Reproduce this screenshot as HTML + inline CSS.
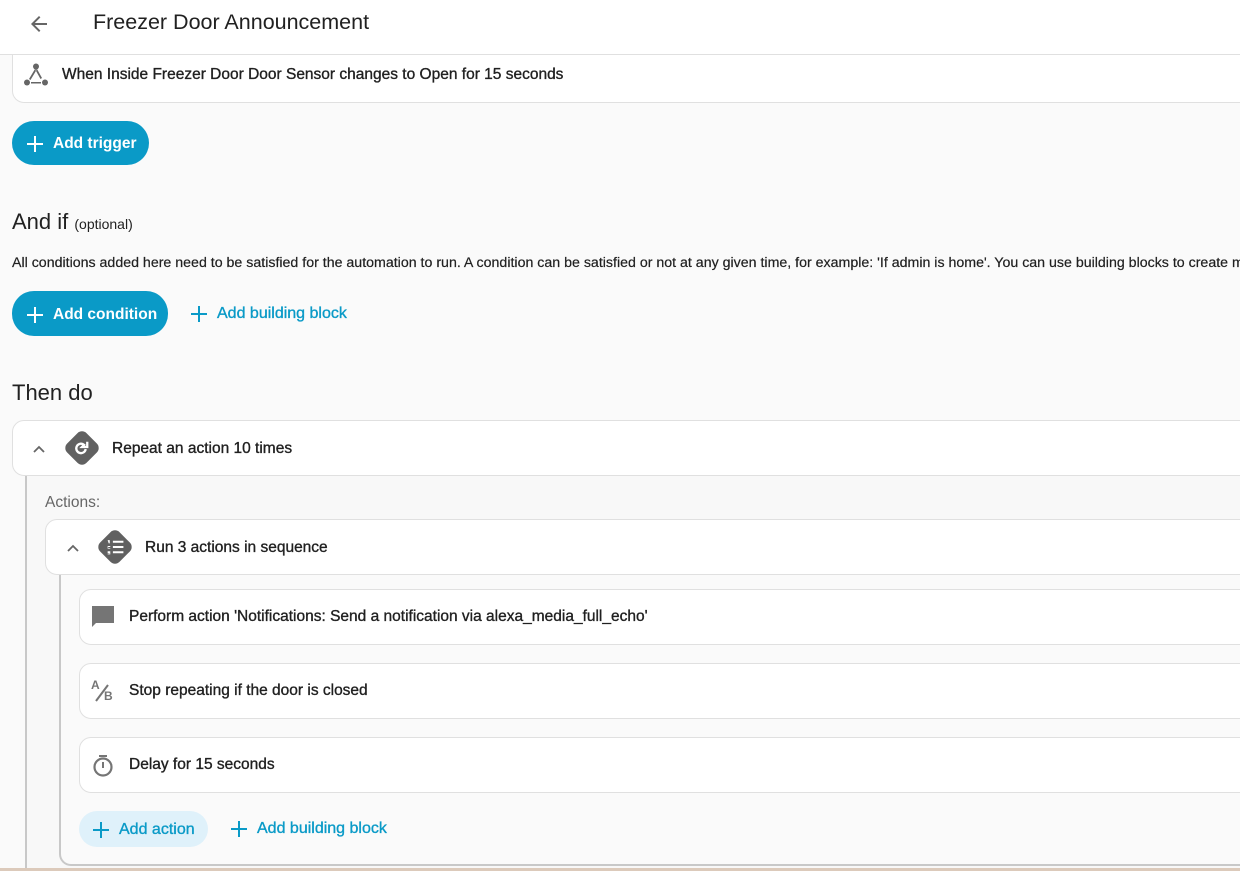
<!DOCTYPE html>
<html><head><style>
*{box-sizing:border-box;margin:0;padding:0}
html,body{width:1240px;height:871px;overflow:hidden}
body{background:#fafafa;font-family:"Liberation Sans",sans-serif;color:#212121;position:relative}
#w{position:absolute;left:0;top:0;width:1240px;height:871px;overflow:hidden}
.abs{position:absolute}
.hdr{left:0;top:0;width:1240px;height:55px;background:#fff;border-bottom:1px solid #e0e0e0}
.card{background:#fff;border:1px solid #e0e0e0;border-radius:12px}
.t{font-size:15.5px;white-space:nowrap;-webkit-text-stroke:0.35px #212121}
.btn{background:#0a9ac7;color:#fff;border-radius:22px;font-weight:bold;font-size:15.5px;display:flex;align-items:center;padding-left:14px}
.lnk{color:#0a9ac7;font-size:16px;display:flex;align-items:center;white-space:nowrap;-webkit-text-stroke:0.35px #0a9ac7}
.h2{font-size:22px;white-space:nowrap}
.pl{margin-right:9px;flex:none}
</style></head><body><div id="w">
<div class="abs hdr"></div>
<svg class="abs" style="left:27px;top:12px" width="24" height="24" viewBox="0 0 24 24"><path d="M20 11H7.8l5.6-5.6L12 4l-8 8 8 8 1.4-1.4L7.8 13H20z" fill="#666"/></svg>
<div class="abs" style="left:93px;top:10px;font-size:21.5px">Freezer Door Announcement</div>

<div class="abs card" style="left:12px;top:55px;width:1260px;height:48px;border-top:none;border-radius:0 0 12px 12px"></div>
<svg class="abs" style="left:23px;top:62px" width="26" height="26" viewBox="0 0 26 26" fill="#666"><circle cx="13" cy="4.5" r="3"/><circle cx="4" cy="20.5" r="3"/><circle cx="22" cy="20.5" r="3"/><path d="M12 7l-6 10 1.5 1 6-10zM14 7l5 9-1.5 1-5-9z"/><path d="M8 20h10v1.5H8z"/></svg>
<div class="abs t" style="left:62px;top:66px">When Inside Freezer Door Door Sensor changes to Open for 15 seconds</div>

<div class="abs btn" style="left:12px;top:121px;width:137px;height:44px;padding-top:2px"><svg class="pl" width="18" height="18" viewBox="0 0 18 18"><path d="M8 1h2v16H8zM1 8h16v2H1z" fill="#fff"/></svg>Add trigger</div>

<div class="abs h2" style="left:12px;top:209px">And if <span style="font-size:14px">(optional)</span></div>
<div class="abs" style="left:12px;top:255px;font-size:14.2px;white-space:nowrap;-webkit-text-stroke:0.2px #212121">All conditions added here need to be satisfied for the automation to run. A condition can be satisfied or not at any given time, for example: 'If admin is home'. You can use building blocks to create more complex conditions.</div>
<div class="abs btn" style="left:12px;top:291px;width:156px;height:45px;padding-top:2px"><svg class="pl" width="18" height="18" viewBox="0 0 18 18"><path d="M8 1h2v16H8zM1 8h16v2H1z" fill="#fff"/></svg>Add condition</div>
<div class="abs lnk" style="left:190px;top:305px"><svg class="pl" width="18" height="18" viewBox="0 0 18 18"><path d="M8 1h2v16H8zM1 8h16v2H1z" fill="#0a9ac7"/></svg>Add building block</div>

<div class="abs h2" style="left:12px;top:380px">Then do</div>

<div class="abs" style="left:25px;top:470px;width:1230px;height:398px;border-left:2px solid #c8c8c8;background:#f8f8f8"></div>
<div class="abs card" style="left:12px;top:420px;width:1260px;height:56px"></div>
<svg class="abs" style="left:30px;top:440px" width="18" height="18" viewBox="0 0 18 18"><path d="M4 12l5-5 5 5" stroke="#666" stroke-width="1.8" fill="none"/></svg>
<svg class="abs" style="left:61px;top:427px" width="42" height="42" viewBox="0 0 40 40"><rect x="7" y="7" width="26" height="26" rx="6" transform="rotate(45 20 20)" fill="#616161"/><path d="M25 14v5h-5l2-2a4.5 4.5 0 1 0 1.5 4" stroke="#fff" stroke-width="2.2" fill="none"/></svg>
<div class="abs t" style="left:112px;top:440px">Repeat an action 10 times</div>
<div class="abs" style="left:45px;top:494px;font-size:15.5px;color:#666">Actions:</div>

<div class="abs" style="left:59px;top:560px;width:1220px;height:306px;border-left:2px solid #c8c8c8;border-bottom:2px solid #c8c8c8;border-radius:0 0 0 12px;background:#fafafa"></div>
<div class="abs card" style="left:45px;top:519px;width:1230px;height:56px"></div>
<svg class="abs" style="left:64px;top:539px" width="18" height="18" viewBox="0 0 18 18"><path d="M4 12l5-5 5 5" stroke="#666" stroke-width="1.8" fill="none"/></svg>
<svg class="abs" style="left:94px;top:526px" width="42" height="42" viewBox="0 0 40 40"><rect x="7" y="7" width="26" height="26" rx="6" transform="rotate(45 20 20)" fill="#616161"/><path d="M18 14h10v2H18zM18 19h10v2H18zM18 24h10v2H18zM13 13.5h2v3h-1zM13 19h2.5v1h-2v1h2v.5h-2.5zM13 24h2.5v3H13v-.7h1.8v-.5H13z" fill="#fff"/></svg>
<div class="abs t" style="left:145px;top:539px">Run 3 actions in sequence</div>

<div class="abs card" style="left:79px;top:589px;width:1200px;height:56px"></div>
<svg class="abs" style="left:90px;top:604px" width="26" height="26" viewBox="0 0 26 26"><path d="M2 2h22v17H6l-4 4z" fill="#757575"/></svg>
<div class="abs t" style="left:129px;top:608px">Perform action 'Notifications: Send a notification via alexa_media_full_echo'</div>

<div class="abs card" style="left:79px;top:663px;width:1200px;height:56px"></div>
<div class="abs" style="left:91px;top:678px;font-size:12px;font-weight:bold;color:#757575">A</div>
<svg class="abs" style="left:92px;top:680px" width="24" height="24" viewBox="0 0 24 24"><path d="M4 21L16 5" stroke="#757575" stroke-width="2"/></svg>
<div class="abs" style="left:104px;top:689px;font-size:12px;font-weight:bold;color:#757575">B</div>
<div class="abs t" style="left:129px;top:682px">Stop repeating if the door is closed</div>

<div class="abs card" style="left:79px;top:737px;width:1200px;height:56px"></div>
<svg class="abs" style="left:90px;top:752px" width="26" height="26" viewBox="0 0 26 26"><circle cx="13" cy="15" r="8.5" stroke="#757575" stroke-width="2.2" fill="none"/><path d="M9 3h8v2H9zM12 10h2v6h-2z" fill="#757575"/></svg>
<div class="abs t" style="left:129px;top:756px">Delay for 15 seconds</div>

<div class="abs lnk" style="left:79px;top:811px;width:129px;height:36px;background:#dff1fa;border-radius:18px;padding-left:13px;padding-top:1px"><svg class="pl" width="18" height="18" viewBox="0 0 18 18"><path d="M8 1h2v16H8zM1 8h16v2H1z" fill="#0a9ac7"/></svg>Add action</div>
<div class="abs lnk" style="left:230px;top:820px"><svg class="pl" width="18" height="18" viewBox="0 0 18 18"><path d="M8 1h2v16H8zM1 8h16v2H1z" fill="#0a9ac7"/></svg>Add building block</div>

<div class="abs" style="left:0;top:868px;width:1240px;height:3px;background:#dccabb"></div>
</div></body></html>
